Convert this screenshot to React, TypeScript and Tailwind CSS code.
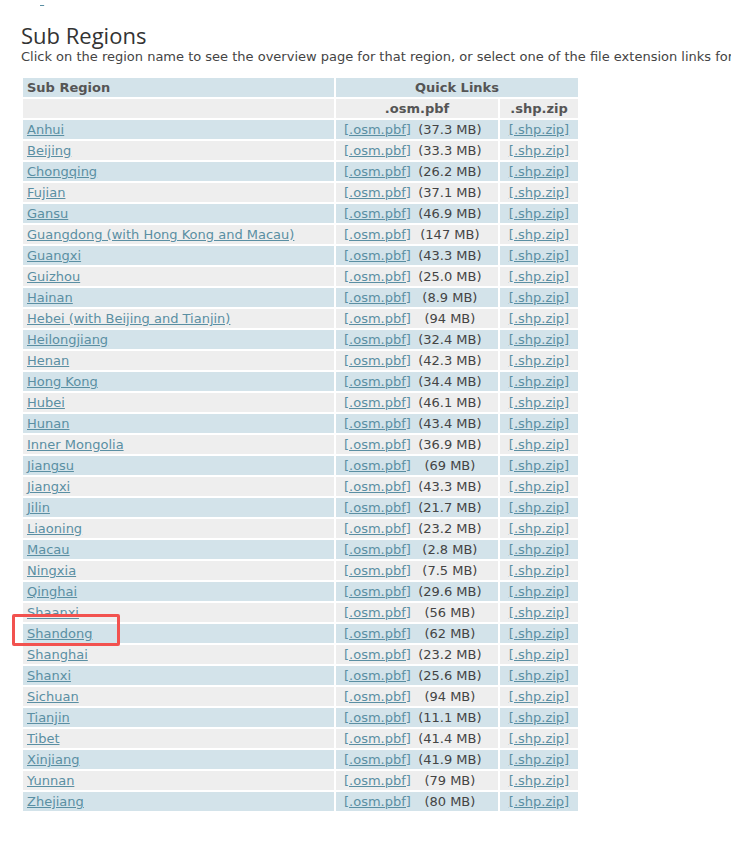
const rows: [string, string, string][] = [
["Anhui","(37.3 MB)",""],["Beijing","(33.3 MB)",""],["Chongqing","(26.2 MB)",""],["Fujian","(37.1 MB)",""],["Gansu","(46.9 MB)",""],["Guangdong (with Hong Kong and Macau)","(147 MB)",""],["Guangxi","(43.3 MB)",""],["Guizhou","(25.0 MB)",""],["Hainan","(8.9 MB)",""],["Hebei (with Beijing and Tianjin)","(94 MB)",""],["Heilongjiang","(32.4 MB)",""],["Henan","(42.3 MB)",""],["Hong Kong","(34.4 MB)",""],["Hubei","(46.1 MB)",""],["Hunan","(43.4 MB)",""],["Inner Mongolia","(36.9 MB)",""],["Jiangsu","(69 MB)",""],["Jiangxi","(43.3 MB)",""],["Jilin","(21.7 MB)",""],["Liaoning","(23.2 MB)",""],["Macau","(2.8 MB)",""],["Ningxia","(7.5 MB)",""],["Qinghai","(29.6 MB)",""],["Shaanxi","(56 MB)",""],["Shandong","(62 MB)",""],["Shanghai","(23.2 MB)",""],["Shanxi","(25.6 MB)",""],["Sichuan","(94 MB)",""],["Tianjin","(11.1 MB)",""],["Tibet","(41.4 MB)",""],["Xinjiang","(41.9 MB)",""],["Yunnan","(79 MB)",""],["Zhejiang","(80 MB)",""]];

export default function App() {
  return (
    <div className="relative w-[731px] h-[845px] overflow-hidden bg-white text-[#444] text-[13px]" style={{ fontFamily: '"DejaVu Sans", Verdana, sans-serif' }}>
      <div className="h-[14px] -mt-[8px] pl-[40px] flex gap-2 text-[13px] leading-[16px]">
        <span className="underline text-[#5a8fa3] w-[123px] inline-block">&nbsp;</span><span>&nbsp;</span>
      </div>
      <div className="pl-[21px]">
        <h2 className="mt-[16px] text-[22px] leading-[26px] text-[#333] font-normal" style={{ fontFamily: '"Open Sans", "DejaVu Sans", sans-serif' }}>Sub Regions</h2>
        <p className="mt-[1px] text-[13px] leading-[16px] whitespace-nowrap">Click on the region name to see the overview page for that region, or select one of the file extension links for</p>
        <table className="mt-[11px] w-[559px] border-collapse text-[13px] leading-[19px]">
          <thead>
            <tr className="bg-[#d3e3ea]">
              <th className="border-2 border-white text-left px-[4px] w-[313px] font-bold text-[#555]">Sub Region</th>
              <th colSpan={2} className="border-2 border-white text-center font-bold text-[#555]">Quick Links</th>
            </tr>
            <tr className="bg-[#eeeeee]">
              <th className="border-2 border-white"></th>
              <th className="border-2 border-white text-center w-[164px] font-bold text-[#555]">.osm.pbf</th>
              <th className="border-2 border-white text-center font-bold text-[#555]">.shp.zip</th>
            </tr>
          </thead>
          <tbody>
            {rows.map(([n, s], i) => (
              <tr key={n} className={i % 2 === 0 ? "bg-[#d3e3ea]" : "bg-[#eeeeee]"}>
                <td className="border-2 border-white px-[4px] relative">
                  <a className="underline text-[#5a8fa3]">{n}</a>
                  {n === "Shandong" && <span className="absolute left-[-11px] top-[-10px] w-[108px] h-[32px] border-[3px] border-[#f2524f] rounded-[2px]" />}
                </td>
                <td className="border-2 border-white px-[8px] whitespace-nowrap">
                  <a className="underline text-[#5a8fa3]">[.osm.pbf]</a>
                  <span className="inline-block w-[74px] text-center ml-[2px]">{s}</span>
                </td>
                <td className="border-2 border-white text-center"><a className="underline text-[#5a8fa3]">[.shp.zip]</a></td>
              </tr>
            ))}
          </tbody>
        </table>
      </div>
    </div>
  );
}
